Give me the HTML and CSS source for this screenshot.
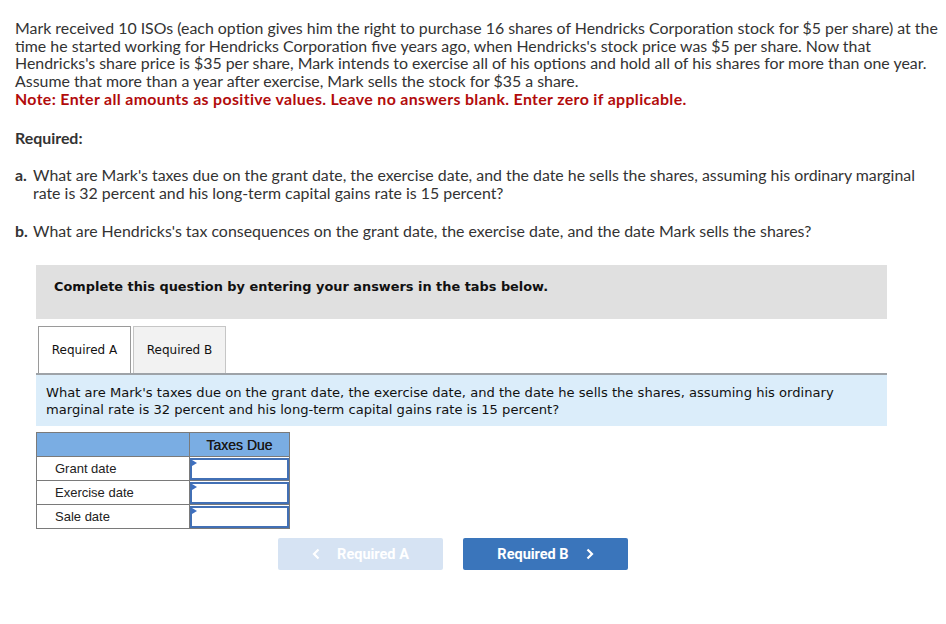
FILE: index.html
```html
<!DOCTYPE html>
<html lang="en">
<head>
  <meta charset="UTF-8">
  <title>Hendricks Corporation ISOs</title>
  <link rel="stylesheet" href="styles.css">
</head>
<body>
  <div class="question">
    <p class="intro">Mark received 10 ISOs (each option gives him the right to purchase 16 shares of Hendricks Corporation stock for $5 per share) at the time he started working for Hendricks Corporation five years ago, when Hendricks's stock price was $5 per share. Now that Hendricks's share price is $35 per share, Mark intends to exercise all of his options and hold all of his shares for more than one year. Assume that more than a year after exercise, Mark sells the stock for $35 a share.</p>
    <p class="note">Note: Enter all amounts as positive values. Leave no answers blank. Enter zero if applicable.</p>

    <p class="required">Required:</p>

    <div class="part">
      <span class="letter">a.</span>
      <span>What are Mark's taxes due on the grant date, the exercise date, and the date he sells the shares, assuming his ordinary marginal rate is 32 percent and his long-term capital gains rate is 15 percent?</span>
    </div>
    <div class="part">
      <span class="letter">b.</span>
      <span>What are Hendricks's tax consequences on the grant date, the exercise date, and the date Mark sells the shares?</span>
    </div>
  </div>

  <div class="work">
    <div class="banner">Complete this question by entering your answers in the tabs below.</div>

    <div class="tabs">
      <div class="tab active">Required A</div>
      <div class="tab">Required B</div>
    </div>

    <div class="prompt">What are Mark's taxes due on the grant date, the exercise date, and the date he sells the shares, assuming his ordinary marginal rate is 32 percent and his long-term capital gains rate is 15 percent?</div>

    <table class="answers">
      <tr>
        <th class="label-col"></th>
        <th class="input-col">Taxes Due</th>
      </tr>
      <tr>
        <td class="label">Grant date</td>
        <td class="cell"><div class="box"></div></td>
      </tr>
      <tr>
        <td class="label">Exercise date</td>
        <td class="cell"><div class="box"></div></td>
      </tr>
      <tr>
        <td class="label">Sale date</td>
        <td class="cell"><div class="box"></div></td>
      </tr>
    </table>

    <div class="nav">
      <button class="nav-btn prev">
        <svg class="chev" width="8" height="12" viewBox="0 0 8 12"><path d="M6.5 1.5 L2 6 L6.5 10.5" fill="none" stroke="#fff" stroke-width="2.2"/></svg>
        <span>Required A</span>
      </button>
      <button class="nav-btn next">
        <span>Required B</span>
        <svg class="chev" width="8" height="12" viewBox="0 0 8 12"><path d="M1.5 1.5 L6 6 L1.5 10.5" fill="none" stroke="#fff" stroke-width="2.2"/></svg>
      </button>
    </div>
  </div>
</body>
</html>
```

FILE: styles.css
```css
/* base */
* {
  box-sizing: border-box;
}

body {
  margin: 0;
  padding: 19px 8px 0 15px;
  font-family: Lato, "Open Sans", sans-serif;
  color: #333;
  background: #fff;
}

p {
  margin: 0;
}

.question {
  font-size: 15.9px;
  line-height: 17.7px;
}

.note {
  color: #b20b0b;
  font-weight: bold;
  letter-spacing: 0.35px;
}

.required {
  font-weight: bold;
  margin-top: 21px;
}

.part {
  display: flex;
  margin-top: 20px;
}

.part .letter {
  font-weight: bold;
  width: 18px;
  flex-shrink: 0;
}

/* answer area */
.work {
  margin: 26px 0 0 21px;
  width: 851px;
  font-family: "DejaVu Sans", Verdana, sans-serif;
  color: #111;
}

.banner {
  background: #e0e0e0;
  height: 54px;
  padding: 14px 18px;
  font-size: 12.9px;
  font-weight: bold;
}

.tabs {
  display: flex;
  gap: 2px;
  margin: 7px 0 0 2px;
}

.tab {
  width: 93px;
  height: 47px;
  border: 1px solid #c6c6c6;
  border-bottom: none;
  background: #f2f2f2;
  font-size: 12px;
  text-align: center;
  line-height: 47px;
}

.tab.active {
  background: #fff;
  border-color: #9a9a9a;
  position: relative;
  top: 1px;
  margin-top: -1px;
}

.prompt {
  background: #dbedfa;
  border-top: 2px solid #9ea3a8;
  height: 53px;
  padding: 9px 10px;
  font-size: 13.1px;
  line-height: 17px;
}

.answers {
  border-collapse: collapse;
  margin-top: 6px;
  font-family: "Liberation Sans", Arial, sans-serif;
  font-size: 13px;
}

.answers th {
  background: #7aade3;
  border: 1px solid #7a7a7a;
  height: 24px;
  font-weight: normal;
  font-size: 14px;
  color: #1a1a1a;
  text-shadow: 0 0 0.4px #1a1a1a;
}

.label-col {
  width: 153px;
}

.input-col {
  width: 100px;
}

.answers td {
  border: 1px solid #7a7a7a;
  height: 24px;
}

.label {
  padding-left: 18px;
  color: #222;
}

.cell {
  padding: 0;
}

.box {
  height: 22px;
  border: 2px solid #4270b5;
  background: #fff;
  position: relative;
}

/* small arrow marking the input */
.box::before {
  content: "";
  position: absolute;
  left: 0;
  top: 0;
  border-left: 5px solid #3d6fc0;
  border-top: 3px solid transparent;
  border-bottom: 3px solid transparent;
}

.nav {
  display: flex;
  gap: 20px;
  margin: 9px 0 0 242px;
}

.nav-btn {
  width: 165px;
  height: 32px;
  border: none;
  border-radius: 2px;
  font-family: Roboto, "Liberation Sans", sans-serif;
  font-size: 14.5px;
  font-weight: bold;
  color: #fff;
  display: flex;
  align-items: center;
  justify-content: center;
  gap: 17px;
}

.prev {
  background: #d6e3f3;
}

.next {
  background: #3a75bb;
}
```
